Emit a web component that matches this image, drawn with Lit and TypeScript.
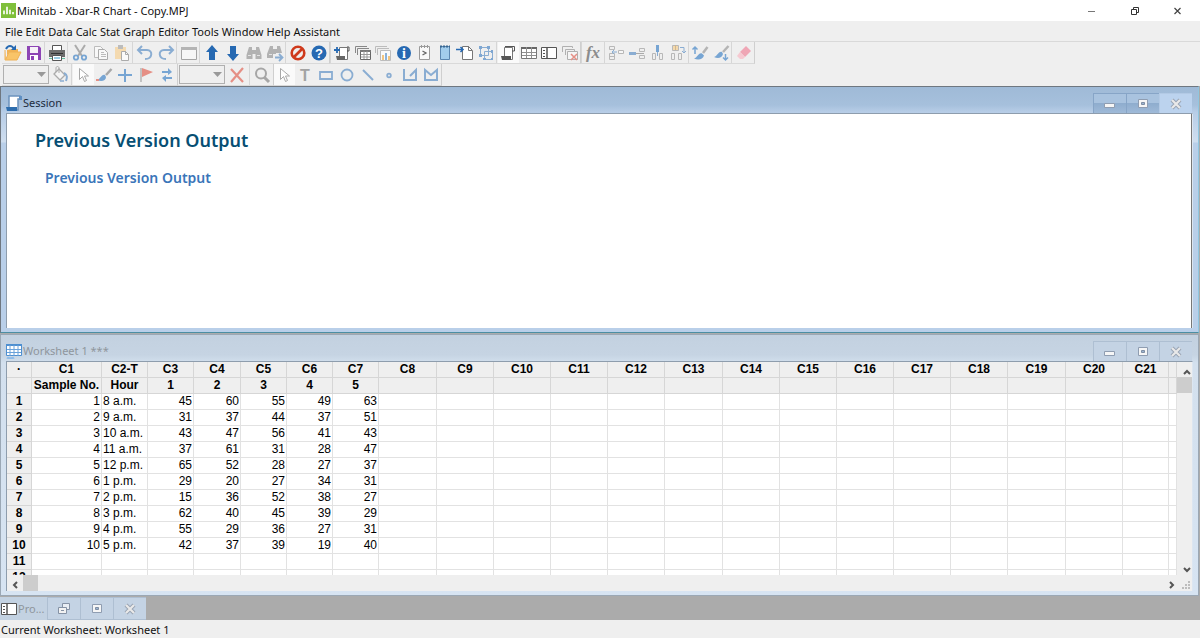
import { LitElement, html, css, svg, nothing } from "lit";
import { customElement } from "lit/decorators.js";
import { classMap } from "lit/directives/class-map.js";

const GREY = "#ababab";
const DARK = "#555555";
const BLUE = "#2669b2";
const PALE = "#8aadd2";

// Every glyph is drawn on a 20 x 20 grid.
const icons: Record<string, unknown> = {
  open: svg`<path d="M2 7v10h12l4-8H6l-3 7" fill="#f9c468" stroke="#eeb054"/><path d="M9 6h6v3H6L4 13V7z" fill="#f0b254"/><path d="M3 6c2-4 6-4 8 0" fill="none" stroke="${BLUE}" stroke-width="2"/><path d="M8 7h5V2z" fill="${BLUE}"/>`,
  save: svg`<path d="M3 3h12l2 2v12H3z" fill="#8d44b5"/><path d="M6 4h8v6H6z" fill="#f6f1f8"/><path d="M6 12h8v5H6z" fill="#fff"/><path d="M7 13h3v4H7z" fill="#8d44b5"/>`,
  print: svg`<path d="M5.500 2.500h9v5h-9z" fill="#fff" stroke="${DARK}"/><path d="M2 7h16v7H2z" fill="#6d6d6d"/><path d="M4 10h12v1H4z" fill="#333"/><path d="M5.500 12.500h9v5h-9z" fill="#fff" stroke="#555"/><path d="M2 15.500h3M15 15.500h3" stroke="#62c0a0"/><path d="M7 15h6" stroke="#3a9ac9"/>`,
  cut: svg`<path d="M5 2l7 11M15 2L8 13" stroke="${GREY}" stroke-width="2"/><circle cx="6" cy="14.500" r="2.200" fill="none" stroke="#77a5d3" stroke-width="1.800"/><circle cx="14" cy="14.500" r="2.200" fill="none" stroke="#77a5d3" stroke-width="1.800"/>`,
  copy: svg`<path d="M3.500 3.500h6l3 3v8h-9z" fill="#f8f8f8" stroke="#bcbcbc"/><path d="M7.500 6.500h6l3 3v7h-9z" fill="#f8f8f8" stroke="${GREY}"/><path d="M10 9.500h3M10 11.500h5M10 13.500h5" stroke="#bbb"/>`,
  paste: svg`<path d="M3 4h11v12H3z" fill="#f4dab0"/><path d="M6 2h5v4H6z" fill="#bcbcbc"/><path d="M9.500 8.500h4l3 3v6h-7z" fill="#fafafa" stroke="${GREY}"/><path d="M13.500 8v3.500h3" fill="none" stroke="${GREY}"/>`,
  undo: svg`<path d="M7 3L3 7l4 4M3 7h9c6 0 6 9-2 9" fill="none" stroke="${PALE}" stroke-width="2"/>`,
  redo: svg`<path d="M13 3l4 4-4 4M17 7H8c-6 0-6 9 2 9" fill="none" stroke="${PALE}" stroke-width="2"/>`,
  frame: svg`<path d="M2.500 4.500h15v12h-15z" fill="#f6f6f6" stroke="#a5a5a5"/><path d="M2 4h16v3H2z" fill="#b4b4b4"/>`,
  up: svg`<path d="M10 2l6 7h-3v8H7V9H4z" fill="${BLUE}"/>`,
  down: svg`<path d="M10 18l6-7h-3V3H7v8H4z" fill="${BLUE}"/>`,
  find: svg`<path d="M5 4h3v3h4V4h3l2.500 8v4h-6v-5h-3v5h-6v-4z" fill="#b2b2b2"/><path d="M4 12.500h3M13 12.500h3" stroke="#e4e4e4"/>`,
  findNext: svg`<path d="M5 3h3v3h4V3h3l2 7h-6v1H8v4H2v-4z" fill="#b2b2b2"/><path d="M4 11.500h3" stroke="#e4e4e4"/><path d="M10 14.500h7M14 11l3.500 3.500L14 18" fill="none" stroke="${PALE}" stroke-width="1.800"/>`,
  cancel: svg`<circle cx="10" cy="10" r="6.300" fill="none" stroke="#cf3a1c" stroke-width="2.600"/><path d="M6 14l8-8" stroke="#cf3a1c" stroke-width="2.600"/>`,
  help: svg`<circle cx="10" cy="10" r="7.500" fill="${BLUE}"/><text x="10" y="15" text-anchor="middle" class="sans" fill="#fff">?</text>`,
  sessionNew: svg`<path d="M7.500 4.500h8v12h-8z" fill="#fff" stroke="#777"/><path d="M4 13h9v4H5z" fill="#666"/><path d="M15 4h2v4h-2" fill="none" stroke="${DARK}"/><path d="M5 4v6M2 7h6" stroke="${BLUE}" stroke-width="1.800"/>`,
  sheets: svg`<path d="M2.500 10V3.500H14M4.500 12V5.500H16" fill="none" stroke="#888"/><path d="M7.500 7.500h10v9h-10z" fill="#fff" stroke="#666"/><path d="M7 7h11v2H7z" fill="#777"/><path d="M11 8v8M14 8v8M8 11.500h9M8 14h9" stroke="#999"/>`,
  graphs: svg`<path d="M2.500 10V3.500H14M4.500 12V5.500H16" fill="none" stroke="#bcbcbc"/><path d="M7.500 7.500h10v10h-10z" fill="#fafafa" stroke="#bcbcbc"/><path d="M10 12v5" stroke="#f1c580" stroke-width="2"/><path d="M13 10v7" stroke="#8ab2da" stroke-width="2"/><path d="M16 13v4" stroke="#f1c580" stroke-width="2"/>`,
  info: svg`<circle cx="10" cy="10" r="7" fill="${BLUE}"/><text x="10" y="15" text-anchor="middle" class="serif" fill="#fff">i</text>`,
  command: svg`<path d="M5.500 3.500h10v13h-10z" fill="#f8f8f8" stroke="#9a9a9a"/><path d="M7.500 2v3M10.500 2v3M13.500 2v3" stroke="#999"/><path d="M8.500 8l3.500 2-3.500 2" fill="none" stroke="#666" stroke-width="1.300"/>`,
  notebook: svg`<path d="M5.500 3.500h9v13h-9z" fill="#a2cdec" stroke="#5b87b0"/><path d="M5 3.500h10" stroke="#386792" stroke-width="2" stroke-dasharray="2 1"/>`,
  newPage: svg`<path d="M7.500 3.500h6l4 4v9h-10z" fill="#fff" stroke="#777"/><path d="M13.500 3v4.500H17" fill="none" stroke="#777"/><path d="M1 6.500h7M5.500 4L8 6.500 5.500 9" fill="none" stroke="${BLUE}" stroke-width="1.500"/>`,
  region: svg`<path d="M4.500 4.500h8v8h-8zM8.500 8.500h8v8h-8z" fill="none" stroke="#8aadd2"/><path d="M3 3h3v3H3zM11 3h3v3h-3zM3 11h3v3H3zM15 7h2v3h-2zM7 15h3v2H7zM15 15h2v2h-2z" fill="#7fa7d2"/>`,
  session: svg`<path d="M6.500 4.500h8v12h-8z" fill="#fff" stroke="#777"/><path d="M3 13h10v4H4z" fill="#555"/><path d="M7 3.500h9.500V8H14" fill="none" stroke="${DARK}"/>`,
  table: svg`<path d="M2.500 4.500h15v11h-15z" fill="#fff" stroke="#777"/><path d="M2 4h16v2H2z" fill="#666"/><path d="M7.500 4v11M12.500 4v11M3 9.500h14M3 12.500h14" stroke="#909090"/>`,
  project: svg`<path d="M2.500 4.500h15v11h-15z" fill="#fff" stroke="#555"/><path d="M8 4v12" stroke="#555" stroke-width="1.500"/><path d="M4 7.500h2M4 10.500h2M4 13.500h2" stroke="#555"/>`,
  closeAll: svg`<path d="M2.500 9V3.500h10V5M5.500 12V6.500h9V8" fill="none" stroke="#b0b0b0"/><path d="M7.500 8.500h10v8h-10z" fill="#f5f5f5" stroke="#b0b0b0"/><path d="M11 11l6 6M17 11l-6 6" stroke="#e58f85" stroke-width="1.500"/>`,
  formula: svg`<text x="10" y="15" text-anchor="middle" class="italic" fill="#8c8c8c">fx</text>`,
  rowIns: svg`<path d="M3.500 3.500h5v3h-5zM3.500 10.500h5v6h-5zM4 13.500h5" fill="none" stroke="#b8b8b8"/><path d="M12.500 7.500h5v3h-5z" fill="#f7f7f7" stroke="#b8b8b8"/><path d="M11 9H6M8 7L6 9l2 2" fill="none" stroke="${PALE}"/>`,
  cellIns: svg`<path d="M2 9h7v3H2z" fill="${PALE}"/><path d="M12.500 5.500h5v3h-5zM12.500 12.500h5v3h-5z" fill="none" stroke="#b8b8b8"/><path d="M9 10.500h8" stroke="#aaa"/>`,
  colIns: svg`<path d="M9 2h3v7H9z" fill="#77a5d3"/><path d="M5.500 10.500h3v6h-3zM12.500 10.500h3v6h-3z" fill="none" stroke="#b8b8b8"/><path d="M10.500 9v4" stroke="${PALE}"/>`,
  colMove: svg`<path d="M4.500 2.500h6v5h-6z" fill="#f4d9ad" stroke="#b8b8b8"/><path d="M7.500 2v5" stroke="#d2b78c"/><path d="M3.500 10.500h3v6h-3zM10.500 10.500h3v6h-3z" fill="none" stroke="#b8b8b8"/><path d="M12 4.500h4V10M14 8l2 2 2-2" fill="none" stroke="${PALE}"/>`,
  brushUp: svg`<path d="M17.500 4l-4.500 6" stroke="#b4b4b4" stroke-width="2.500"/><path d="M12 10.500c-4-1-4 4-8 5 4 2 9 1 10-3z" fill="#77a5d3"/><path d="M5 11V4M2.500 6.500L5 4l2.500 2.500" fill="none" stroke="#77a5d3" stroke-width="1.500"/>`,
  brushDown: svg`<path d="M17.500 3L12 9" stroke="#b4b4b4" stroke-width="2.500"/><path d="M11 9c-4-1-4 4-8 5 4 2 8 1 9-3z" fill="#77a5d3"/><path d="M14.500 11v6M12 14.500l2.500 2.500 2.500-2.500" fill="none" stroke="#77a5d3" stroke-width="1.500"/>`,
  eraser: svg`<path d="M12 3l5 5-6 6-5-5z" fill="#efa6b5"/><path d="M6 9l5 5-2 2H6l-3-3z" fill="#f6c9d1"/>`,
  fill: svg`<path d="M4 9l5-5 6 6-5 5z" fill="#f4f4f4" stroke="${GREY}" stroke-width="1.300"/><path d="M9 8V3C9 1 6 1 6 3v4" fill="none" stroke="${GREY}"/><path d="M14 8c4 2 3 5 2 8" fill="none" stroke="${PALE}" stroke-width="2"/><path d="M10 16h4" stroke="${PALE}" stroke-width="1.500"/>`,
  pointer: svg`<path d="M6.500 3.500v11l3-3 2 5 2-1-2-4.500h4z" fill="#fff" stroke="#a8a8a8"/>`,
  brush: svg`<path d="M17.500 4L12 10" stroke="#a8a8a8" stroke-width="2.500"/><path d="M11 10c-4-1-4 4-8 5 4 2 9 1 9-3z" fill="#77a5d3"/><path d="M2 14h3v2H2z" fill="#e58f85"/>`,
  plus: svg`<path d="M10 4v13M3 10h14" stroke="#77a5d3" stroke-width="2"/>`,
  flag: svg`<path d="M5 3v14" stroke="#b4b4b4" stroke-width="1.500"/><path d="M6 3l11 4-11 5z" fill="#e58f85"/>`,
  swap: svg`<path d="M5 6h6V3l4 4-4 3V8H5zM15 12H9v-2l-4 3 4 4v-3h6z" fill="#77a5d3"/>`,
  remove: svg`<path d="M4 4l12 13M16 3L4 17" stroke="#e58f85" stroke-width="2.200"/>`,
  zoom: svg`<circle cx="9" cy="8.500" r="5" fill="none" stroke="#a6a6a6" stroke-width="2"/><path d="M12 12l5 5" stroke="#a6a6a6" stroke-width="3"/>`,
  type: svg`<text x="10" y="16" text-anchor="middle" class="letter" fill="#a3a3a3">T</text>`,
  rect: svg`<path d="M4 7h12v7H4z" fill="none" stroke="${PALE}" stroke-width="1.800"/>`,
  ellipse: svg`<circle cx="10" cy="10" r="5.500" fill="none" stroke="${PALE}" stroke-width="1.800"/>`,
  line: svg`<path d="M5 5l10 10" stroke="${PALE}" stroke-width="2"/>`,
  dot: svg`<circle cx="10" cy="10.500" r="1.800" fill="none" stroke="${PALE}" stroke-width="1.800"/>`,
  polyline: svg`<path d="M4 4v11h12V5l-6 6" fill="none" stroke="${PALE}" stroke-width="2"/>`,
  polygon: svg`<path d="M4 5v10h12V5l-6 5z" fill="none" stroke="${PALE}" stroke-width="2"/>`,
  sheetBlue: svg`<path d="M2.500 3.500h15v11h-15z" fill="#fff" stroke="#4e8fd0"/><path d="M2 3h16v2H2z" fill="#4e8fd0"/><path d="M6 4v11M10 4v11M14 4v11M3 8.500h14M3 11.500h14" stroke="#6aa2da"/><path d="M3 16.500c1 1 6 1 7 0" fill="none" stroke="#8fbce8" stroke-width="2"/>`,
  sessionBlue: svg`<path d="M5 3h11v3h-2v11H5z" fill="#fff" stroke="#6c93bd" stroke-width="1.500"/><path d="M2 14h11v4H3z" fill="#2f6eae"/><path d="M15 3h3v4h-3" fill="#5f8fc2"/>`,
  logo: svg`<path d="M0 0h20v20H0z" fill="#7fbf3a"/><path d="M4 10v5M8 5v10M12 9v6M16 12v3" stroke="#fff" stroke-width="2.200"/>`,
  min: svg`<path d="M4.500 9.500h10v4h-10z" fill="#f6f6f6" stroke="#8f9db1"/>`,
  max: svg`<path d="M5.500 5.500h9v8h-9z" fill="#f6f6f6" stroke="#8f9db1"/><path d="M8.500 8.500h3v2h-3z" fill="#9bb4d2" stroke="#7f8ea3"/>`,
  close: svg`<path d="M6 6l8 8M14 6l-8 8" stroke="#98a3b3" stroke-width="4"/><path d="M6 6l8 8M14 6l-8 8" stroke="#e9e9e9" stroke-width="2.200"/>`,
  restore: svg`<path d="M8.500 4.500h7v6h-7z" fill="#e9eef4" stroke="#8592a5"/><path d="M4.500 8.500h8v6h-8z" fill="#f2f2f2" stroke="#8592a5"/><path d="M7 11.500h3" stroke="#8592a5"/>`,
  sysMin: svg`<path d="M6 10.500h7" stroke="#777"/>`,
  sysMax: svg`<path d="M6.500 8.500h5v5h-5zM8.500 8V6.500h5v5H12" fill="none" stroke="#333"/>`,
  sysClose: svg`<path d="M6.500 7l6 6M12.500 7l-6 6" stroke="#444" stroke-width="1.200"/>`,
  arrowUp: svg`<path d="M7 12l3-3 3 3" fill="none" stroke="#555" stroke-width="2"/>`,
  arrowDown: svg`<path d="M7 8l3 3 3-3" fill="none" stroke="#555" stroke-width="2"/>`,
  arrowLeft: svg`<path d="M10 7l-3 3 3 3" fill="none" stroke="#555" stroke-width="2"/>`,
  arrowRight: svg`<path d="M9 7l3 3-3 3" fill="none" stroke="#555" stroke-width="2"/>`,
};

const icon = (name: string, viewBox = "0 0 20 20") =>
  html`<svg viewBox=${viewBox} width="20" height="20" fill="none" aria-hidden="true">${icons[name]}</svg>`;

// Trims the empty margin for title-bar icons shown at 16px.
const smallIcon = (name: string) => icon(name, "2 2 16 16");

const iconStyles = css`
  svg { display: block; flex: none; }
  .sans { font: 700 13px "Liberation Sans", Arial, sans-serif; }
  .serif { font: 700 14px "Liberation Serif", serif; }
  .letter { font: 700 16px "Liberation Sans", Arial, sans-serif; }
  .italic { font: italic 700 17px "Liberation Serif", serif; }
  button {
    display: grid;
    place-items: center;
    min-width: 0;
    margin: 0;
    padding: 0;
    border: 0;
    background: none;
    font: inherit;
    color: inherit;
  }
`;

@customElement("tool-bar")
class ToolBar extends LitElement {
  static properties = { items: { type: String }, pressed: { type: String }, combo: { type: String } };
  declare items: string;
  declare pressed: string;
  declare combo: string;

  static styles = [
    iconStyles,
    css`
      :host {
        display: flex;
        box-sizing: border-box;
        height: 22px;
        border-bottom: 1px solid #d9d9d9;
        border-right: 1px solid #cfcfcf;
      }
      button { flex: 1 1 0; overflow: hidden; }
      .pressed { background: #fafafa; }
      .sep { flex: none; width: 1px; margin-right: 1px; background: #d6d6d6; }
      .combo { display: grid; flex: none; width: 48px; padding: 1px; box-sizing: border-box; }
      .combo > * { grid-area: 1 / 1; }
      select {
        appearance: none;
        width: 100%;
        height: 19px;
        border: 1px solid #b0b0b0;
        border-radius: 0;
        background: #efefef;
      }
      .drop { justify-self: end; align-self: center; pointer-events: none; }
    `,
  ];

  render() {
    return html`
      ${this.combo
        ? html`<span class="combo">
            <select aria-label=${this.combo}></select>
            <svg class="drop" viewBox="0 0 15 19" width="15" height="19"><path d="M3 7h9l-4.500 5z" fill="#999" /></svg>
          </span>`
        : nothing}
      ${this.items.split(" ").map((name) =>
        name === "|"
          ? html`<span class="sep"></span>`
          : html`<button class=${classMap({ pressed: name === this.pressed })} aria-label=${name}>${icon(name)}</button>`
      )}
    `;
  }
}

@customElement("mdi-window")
class MdiWindow extends LitElement {
  static properties = { heading: {}, glyph: {}, inactive: { type: Boolean, reflect: true } };
  declare heading: string;
  declare glyph: string;
  declare inactive: boolean;

  static styles = [
    iconStyles,
    css`
      :host {
        display: flex;
        flex-direction: column;
        box-sizing: border-box;
        min-height: 0;
        padding: 0 5px 4px 5px;
        border: 1px solid #6f7780;
        border-right-color: #8fc6e0;
        border-bottom-color: #4b8ea3;
        background: linear-gradient(#9fbad7, #a6c0dc 18px, #b7cde7 25px, #cfdeef 55px, #b9cfe9 56px);
      }
      :host([inactive]) {
        border-color: #9ba8b5;
        background: linear-gradient(#c3d1e0, #c6d4e3 20px, #d3e0ee 28px, #d7e4f2);
      }
      header { display: flex; height: 26px; flex: none; }
      h2 {
        display: flex;
        flex: 1;
        align-items: center;
        gap: 1px;
        margin: 0;
        padding-top: 5px;
        font-size: 11px;
        font-weight: 400;
        color: #1d2c3d;
      }
      :host([inactive]) h2 { color: #8f969d; }
      .glyph svg { width: 16px; height: 16px; }
      .controls { display: flex; align-self: flex-end; height: 20px; padding-right: 1px; }
      .controls button {
        width: 33px;
        box-sizing: border-box;
        border: 1px solid #87a5c7;
        border-right-width: 0;
        border-bottom: 0;
        background: linear-gradient(#a9c3df 45%, #8fadce 50%, #9fbad8);
      }
      .controls button:last-child { background: #bcd3ee; border-color: #b3cae5; }
      :host([inactive]) .controls button { background: #c4d3e4; border-color: #aebfd2; }
      .body {
        flex: 1;
        min-height: 0;
        display: flex;
        flex-direction: column;
        border: 1px solid #8e9dad;
        border-right-color: #dce6f1;
        border-bottom: 0;
        background: #fff;
      }
    `,
  ];

  render() {
    return html`
      <header>
        <h2><span class="glyph">${smallIcon(this.glyph)}</span>${this.heading}</h2>
        <div class="controls">
          ${[["min", "Minimize"], ["max", "Maximize"], ["close", "Close"]].map(
            ([name, label]) => html`<button aria-label=${label}>${icon(name)}</button>`
          )}
        </div>
      </header>
      <div class="body"><slot></slot></div>
    `;
  }
}

const columns: { id: string; name: string; width: number }[] = [
  { id: "C1", name: "Sample No.", width: 70 },
  { id: "C2-T", name: "Hour", width: 46 },
  { id: "C3", name: "1", width: 46 },
  { id: "C4", name: "2", width: 47 },
  { id: "C5", name: "3", width: 46 },
  { id: "C6", name: "4", width: 46 },
  { id: "C7", name: "5", width: 46 },
  { id: "C8", name: "", width: 58 },
  ...[57, 57, 57, 57, 58, 57, 57, 57, 57, 57, 58, 57, 46].map((width, i) => ({ id: `C${i + 9}`, name: "", width })),
];

const rows: (number | string)[][] = [
  [1, "8 a.m.", 45, 60, 55, 49, 63],
  [2, "9 a.m.", 31, 37, 44, 37, 51],
  [3, "10 a.m.", 43, 47, 56, 41, 43],
  [4, "11 a.m.", 37, 61, 31, 28, 47],
  [5, "12 p.m.", 65, 52, 28, 27, 37],
  [6, "1 p.m.", 29, 20, 27, 34, 31],
  [7, "2 p.m.", 15, 36, 52, 38, 27],
  [8, "3 p.m.", 62, 40, 45, 39, 29],
  [9, "4 p.m.", 55, 29, 36, 27, 31],
  [10, "5 p.m.", 42, 37, 39, 19, 40],
  [],
  [],
];

@customElement("data-sheet")
class DataSheet extends LitElement {
  static styles = [
    iconStyles,
    css`
      :host {
        display: grid;
        flex: 1;
        min-height: 0;
        grid-template: minmax(0, 1fr) 16px / minmax(0, 1fr) 15px;
        background: #efefef;
        font: 12px/15px "Liberation Sans", Arial, sans-serif;
        color: #000;
      }
      .view { overflow: hidden; background: #fff; }
      table { table-layout: fixed; width: 100%; border-collapse: separate; border-spacing: 0; }
      .index { width: 25px; }
      th, td {
        box-sizing: border-box;
        height: 16px;
        padding: 0;
        border-right: 1px solid #e2e2e2;
        border-bottom: 1px solid #e2e2e2;
        white-space: nowrap;
        overflow: hidden;
      }
      th { background: #efefef; font-weight: 700; text-align: center; border-color: #d6d6d6; }
      td { text-align: right; padding-right: 1px; }
      .text { text-align: left; padding: 0 0 0 1px; }
      .rail { display: flex; }
      .rail button { flex: none; }
      .vertical { flex-direction: column; }
      .vertical button { height: 15px; overflow: hidden; }
      .thumb { width: 15px; height: 16px; background: #cdcdcd; }
      .grow { flex: 1; }
      .horizontal button { width: 16px; overflow: hidden; }
      .corner { display: grid; place-items: end; padding: 2px; }
    `,
  ];

  render() {
    return html`
      <div class="view">
        <table>
          <colgroup>
            <col class="index" />
            ${columns.map((c) => html`<col style="width:${c.width}px" />`)}
            <col />
          </colgroup>
          <thead>
            <tr><th>·</th>${columns.map((c) => html`<th>${c.id}</th>`)}<th></th></tr>
            <tr><th></th>${columns.map((c) => html`<th>${c.name}</th>`)}<th></th></tr>
          </thead>
          <tbody>
            ${rows.map(
              (row, r) => html`<tr>
                <th>${r + 1}</th>
                ${columns.map((_, i) => html`<td class=${classMap({ text: i === 1 })}>${row[i] ?? nothing}</td>`)}
                <td></td>
              </tr>`
            )}
          </tbody>
        </table>
      </div>
      <div class="rail vertical">
        <button aria-label="Scroll up">${icon("arrowUp")}</button>
        <span class="thumb"></span>
        <span class="grow"></span>
        <button aria-label="Scroll down">${icon("arrowDown")}</button>
      </div>
      <div class="rail horizontal">
        <button aria-label="Scroll left">${icon("arrowLeft")}</button>
        <span class="thumb"></span>
        <span class="grow"></span>
        <button aria-label="Scroll right">${icon("arrowRight")}</button>
      </div>
      <div class="corner">
        <svg viewBox="0 0 8 8" width="8" height="8"><path d="M6 0h2v2H6zM3 3h2v2H3zM6 3h2v2H6zM0 6h2v2H0zM3 6h2v2H3zM6 6h2v2H6z" fill="#bdbdbd" /></svg>
      </div>
    `;
  }
}

@customElement("app-root")
class AppRoot extends LitElement {
  static styles = [
    iconStyles,
    css`
      :host {
        display: flex;
        flex-direction: column;
        height: 100vh;
        background: #efefef;
        font: 11px/16px "Noto Sans", "Open Sans", sans-serif;
        color: #111;
      }
      .title { display: flex; align-items: center; height: 21px; flex: none; background: #fff; }
      .title h1 { display: flex; align-items: center; gap: 1px; flex: 1; margin: 0; font-size: 11px; font-weight: 400; }
      .title h1 svg { width: 15px; height: 15px; margin-left: 1px; }
      .system { display: flex; padding-right: 1px; }
      .system button { width: 43px; }
      .menu { display: flex; align-items: center; gap: 3px; height: 21px; flex: none; padding: 2px 0 0 5px; border-bottom: 1px solid #d9d9d9; box-sizing: border-box; }
      .tools { display: flex; flex: none; height: 22px; padding-left: 2px; }
      .first { width: 328px; }
      .second { width: 251px; }
      .third { width: 174px; }
      .fourth { width: 176px; }
      .fifth { width: 96px; }
      .sixth { width: 168px; }
      .workspace {
        display: grid;
        flex: 1;
        min-height: 0;
        grid-template-rows: 247px minmax(0, 1fr) 23px;
        row-gap: 1px;
        padding-right: 1px;
        background: #ababab;
      }
      .output { flex: 1; padding: 12px 28px; border-right: 1px solid #777; }
      .output h3 { margin: 0; font-size: 18px; line-height: 28px; font-weight: 600; color: #074f74; }
      .output h4 { margin: 12px 10px; font-size: 14px; line-height: 24px; font-weight: 600; color: #3a75b9; }
      .dock { display: flex; width: 146px; background: #c3d2e2; color: #8f969d; }
      .dock span { display: flex; align-items: center; gap: 1px; flex: 1; padding-left: 1px; }
      .dock span svg { width: 16px; height: 16px; }
      .dock button { width: 33px; border: 1px solid #aebfd2; border-right: 0; background: #c4d3e4; box-sizing: border-box; }
      footer { flex: none; height: 18px; padding-left: 1px; line-height: 20px; overflow: hidden; }
    `,
  ];

  render() {
    const menus = ["File", "Edit", "Data", "Calc", "Stat", "Graph", "Editor", "Tools", "Window", "Help", "Assistant"];
    return html`
      <div class="title">
        <h1>${icon("logo")}Minitab - Xbar-R Chart - Copy.MPJ</h1>
        <div class="system">
          <button aria-label="Minimize">${icon("sysMin")}</button>
          <button aria-label="Restore">${icon("sysMax")}</button>
          <button aria-label="Close">${icon("sysClose")}</button>
        </div>
      </div>
      <nav class="menu">${menus.map((m) => html`<button>${m}</button>`)}</nav>
      <div class="tools">
        <tool-bar class="first" items="open save | print | cut copy paste | undo redo | frame | up down find findNext | cancel help"></tool-bar>
        <tool-bar class="second" pressed="session" items="| sessionNew sheets graphs info command notebook newPage region | session table project closeAll"></tool-bar>
        <tool-bar class="third" items="| formula | rowIns cellIns colIns colMove | brushUp brushDown | eraser"></tool-bar>
      </div>
      <div class="tools">
        <tool-bar class="fourth" combo="Symbol" pressed="pointer" items="fill | pointer brush plus flag swap"></tool-bar>
        <tool-bar class="fifth" combo="Variable" items="remove | zoom"></tool-bar>
        <tool-bar class="sixth" pressed="pointer" items="pointer type rect ellipse line dot polyline polygon"></tool-bar>
      </div>
      <main class="workspace">
        <mdi-window heading="Session" glyph="sessionBlue">
          <div class="output">
            <h3>Previous Version Output</h3>
            <h4>Previous Version Output</h4>
          </div>
        </mdi-window>
        <mdi-window heading="Worksheet 1 ***" glyph="sheetBlue" inactive><data-sheet></data-sheet></mdi-window>
        <div class="dock">
          <span>${smallIcon("project")}Pro...</span>
          <button aria-label="Restore project">${icon("restore")}</button>
          <button aria-label="Maximize project">${icon("max")}</button>
          <button aria-label="Close project">${icon("close")}</button>
        </div>
      </main>
      <footer>Current Worksheet: Worksheet 1</footer>
    `;
  }
}
